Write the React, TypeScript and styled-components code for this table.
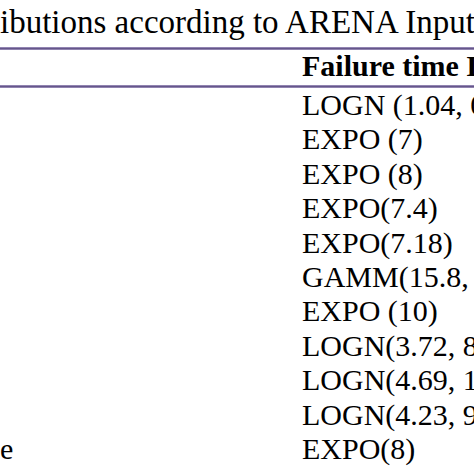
import React from "react";
import styled, { createGlobalStyle } from "styled-components";

const Global = createGlobalStyle`
  html, body { margin: 0; padding: 0; background: #ffffff; }
  body { width: 474px; height: 474px; overflow: hidden; }
`;

const Page = styled.div`
  width: 474px;
  height: 474px;
  overflow: hidden;
  background: #ffffff;
  color: #000000;
  font-family: "Liberation Serif", "Times New Roman", serif;
`;

const Caption = styled.div`
  font-size: 33px;
  line-height: 40px;
  padding-top: 2px;
  margin-bottom: 5px;
  white-space: nowrap;
  overflow: hidden;
`;

const Rule = styled.div`
  height: 3px;
  background: linear-gradient(#bcb0d6 0%, #65568a 34%, #65568a 67%, #bcb0d6 100%);
`;

const Row = styled.div<{ $head?: boolean }>`
  display: grid;
  grid-template-columns: 302px 1fr;
  font-size: 30px;
  font-weight: ${(p) => (p.$head ? 700 : 400)};
  line-height: ${(p) => (p.$head ? "32px" : "34.4px")};
  padding-bottom: ${(p) => (p.$head ? "3px" : "0")};
  white-space: nowrap;
`;

const Label = styled.div`
  overflow: hidden;
  text-align: left;
`;

const Cell = styled.div`
  overflow: hidden;
`;

const rows: [string, string][] = [
  ["", "LOGN (1.04, 0.5)"],
  ["", "EXPO (7)"],
  ["", "EXPO (8)"],
  ["", "EXPO(7.4)"],
  ["", "EXPO(7.18)"],
  ["", "GAMM(15.8, 0.5)"],
  ["", "EXPO (10)"],
  ["", "LOGN(3.72, 8.5)"],
  ["", "LOGN(4.69, 1.2)"],
  ["", "LOGN(4.23, 9.1)"],
  ["e", "EXPO(8)"],
];

export default function App() {
  return (
    <Page>
      <Global />
      <Caption>ibutions according to ARENA Input</Caption>
      <Rule />
      <Row $head>
        <Label />
        <Cell>Failure time Distribution</Cell>
      </Row>
      <Rule />
      {rows.map(([l, v], i) => (
        <Row key={i}>
          <Label>{l}</Label>
          <Cell>{v}</Cell>
        </Row>
      ))}
    </Page>
  );
}
